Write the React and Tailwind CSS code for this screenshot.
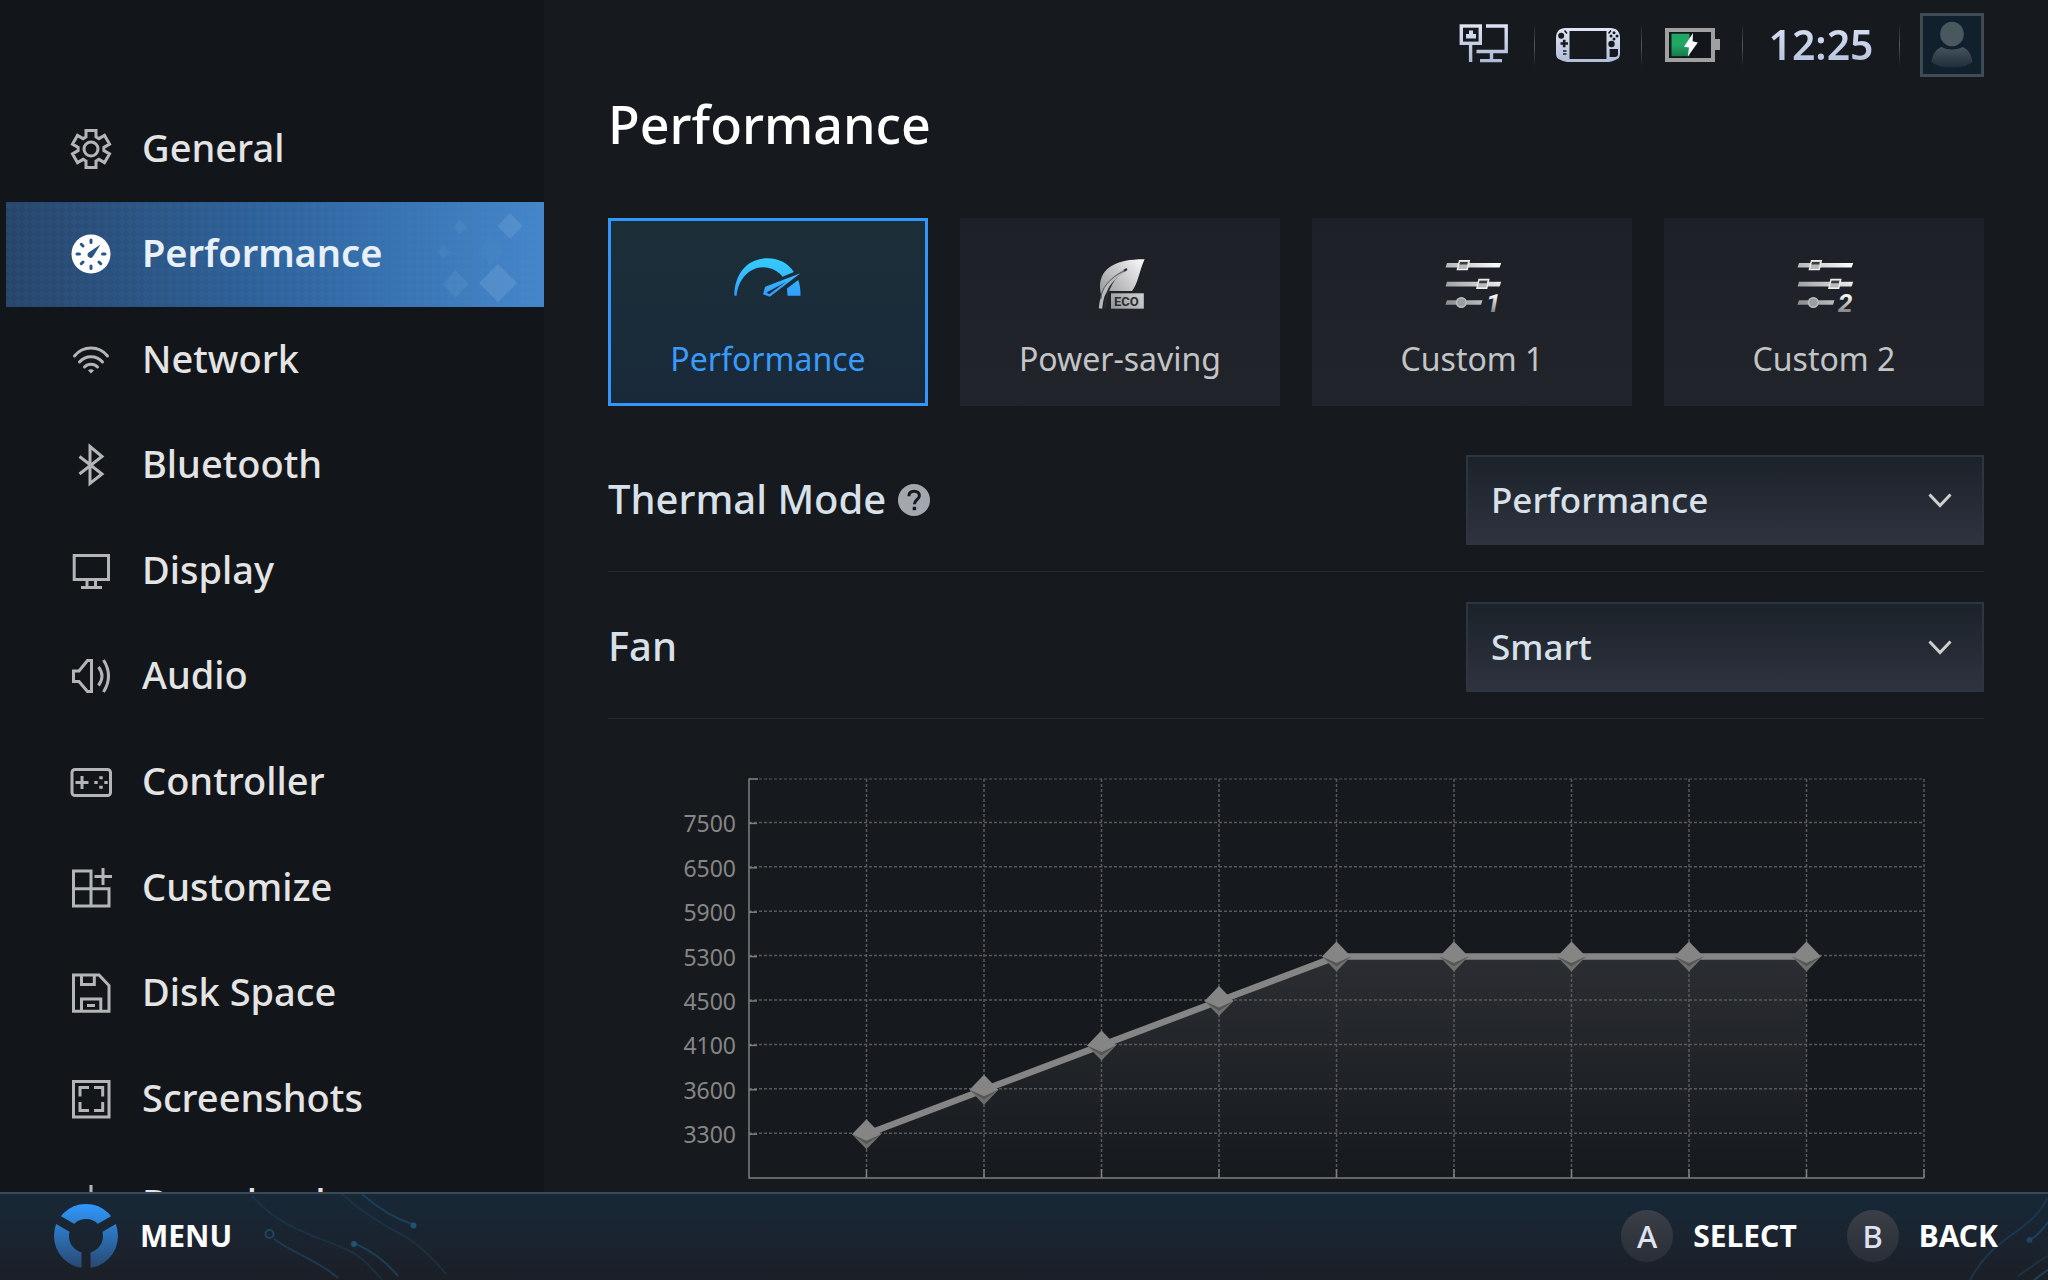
import { useState } from "react";

/* ---------- SIDEBAR ICONS (44 x 44) ---------- */

// six-tooth gear outline around the centre of the 44px box
const gearPoints = Array.from({ length: 6 }, (_, i) => {
  const a = (i * Math.PI) / 3;
  return [[-5, -12], [-5, -18.5], [5, -18.5], [5, -12]]
    .map(([x, y]) => {
      const px = 22 + x * Math.cos(a) - y * Math.sin(a);
      const py = 22 + x * Math.sin(a) + y * Math.cos(a);
      return `${px.toFixed(2)},${py.toFixed(2)}`;
    })
    .join(" ");
}).join(" ");

const icons = {
  general: (
    <>
      <polygon points={gearPoints} />
      <circle cx="22" cy="22" r="7" />
    </>
  ),
  performance: (
    <g stroke="none">
      <circle cx="22" cy="22" r="19.5" fill="#fff" />
      <g stroke="#2a5686" strokeWidth="3" strokeLinecap="round">
        <path d="M22 8 V10.5 M22 34 V36.5 M8 22 H10.5 M33.5 22 H36 M12.3 12.3 L14 14 M12.3 31.7 L14 30 M31.7 31.7 L30 30" />
      </g>
      <path d="M31.5 12.5 L19.6 20.6 A3 3 0 1 0 24 24.6 Z" fill="#2a5686" />
    </g>
  ),
  network: (
    <g strokeLinecap="round">
      <path d="M5.5 18 A21 21 0 0 1 38.5 18 M10.5 24 A15 15 0 0 1 33.5 24 M15.5 29 A9 9 0 0 1 28.5 29" />
      <path d="M19 32.5 Q22 30 25 32.5 L22 35.5 Z" fill="currentColor" stroke="none" />
    </g>
  ),
  bluetooth: <path d="M10.5 13.5 L33 31 L21 40.5 V3.5 L33 13.5 L10.5 31" />,
  display: <path d="M5.2 6.5 H39.5 V30.5 H5.2 Z M18 31 V38 M26.5 31 V38 M12 38.5 H33" />,
  audio: (
    <path d="M4.5 17 H10 L18.5 6.5 H22.5 V37.5 H18.5 L10 27.5 H4.5 Z M29.5 13 Q36.5 22 29.5 31.5 M34.5 6 Q44.5 22 34.5 38" />
  ),
  controller: (
    <>
      <rect x="3" y="9.5" width="38.5" height="26" rx="3" />
      <path d="M6.5 22.5 H19.5 M13 16 V29" />
      <path d="M30.3 17.7 H33.7 M30.3 27.2 H33.7 M25.3 22.5 H28.7 M35.3 22.5 H38.7" />
    </>
  ),
  customize: <path d="M22 22.8 V5 H4.5 V40 H40 V22.8 H4.5 M22 22.8 V40 M25.5 10.5 H43 M34 2 V19" />,
  disk: (
    <path d="M4.5 4 H30 L40 14.5 V40.3 H4.5 Z M12.5 4 V13.5 H25.3 V4 M12.5 40 V28 H31.8 V40 M18 34.5 H26" />
  ),
  screenshots: (
    <>
      <rect x="4.5" y="4.5" width="35.5" height="35.5" />
      <path d="M11 19.5 V10.5 H20 M25 10.5 H33.7 V19.5 M33.7 25 V33.5 H25 M20 33.5 H11 V25" />
    </>
  ),
  downloads: <path d="M22 3 V28 M12 19 L22 29 L32 19 M4.5 30 V40 H39.5 V30" />,
};

const navItems = [
  { id: "general", label: "General" },
  { id: "performance", label: "Performance" },
  { id: "network", label: "Network" },
  { id: "bluetooth", label: "Bluetooth" },
  { id: "display", label: "Display" },
  { id: "audio", label: "Audio" },
  { id: "controller", label: "Controller" },
  { id: "customize", label: "Customize" },
  { id: "disk", label: "Disk Space" },
  { id: "screenshots", label: "Screenshots" },
  { id: "downloads", label: "Downloads" },
];

function ActiveBackdrop() {
  return (
    <>
      <svg className="absolute inset-0 w-full h-full" aria-hidden="true">
        <defs>
          <pattern id="weave" width="8" height="8" patternUnits="userSpaceOnUse">
            <path d="M4 0 L8 4 L4 8 L0 4 Z" fill="#5aa0d0" fillOpacity="0.05" />
          </pattern>
        </defs>
        <rect width="100%" height="100%" fill="url(#weave)" />
      </svg>
      <svg className="absolute right-0 top-0" width="160" height="106" viewBox="0 0 160 106" fill="#a5cbee" aria-hidden="true">
        <path d="M126 11 L138.5 24 L126 37 L113.5 24 Z" fillOpacity="0.16" />
        <path d="M76 18 L82.5 25 L76 32 L69.5 25 Z" fillOpacity="0.1" />
        <path d="M59.5 43 L66 50 L59.5 57 L53 50 Z" fillOpacity="0.08" />
        <path d="M107 34 L120 49 L107 64 L94 49 Z" fillOpacity="0.04" />
        <path d="M71.5 68 L84.5 82 L71.5 96 L58.5 82 Z" fillOpacity="0.1" />
        <path d="M114 62 L133 81 L114 100 L95 81 Z" fillOpacity="0.18" />
      </svg>
    </>
  );
}

function Sidebar() {
  return (
    <aside className="w-[544px] shrink-0 overflow-hidden bg-[#12151a] pt-24 pl-[6px]">
      <nav className="grid auto-rows-fr h-[1161px]">
        {navItems.map((item) => {
          const active = item.id === "performance";
          return (
            <a
              key={item.id}
              href={`#${item.id}`}
              aria-current={active ? "page" : undefined}
              className={
                active
                  ? "relative flex items-center gap-[29px] pl-[63px] text-[38px] leading-[48px] font-semibold text-[#eaf0f7] bg-gradient-to-r from-[#27456a] via-[#2e649e] to-[#4486cb]"
                  : "relative flex items-center gap-[29px] pl-[63px] text-[38px] leading-[48px] font-medium text-[#e4e4e4]"
              }
            >
              {active && <ActiveBackdrop />}
              <svg
                className="relative w-11 h-11 shrink-0 text-[#b4b5b7]"
                viewBox="0 0 44 44"
                fill="none"
                stroke="currentColor"
                strokeWidth="3"
                aria-hidden="true"
              >
                {icons[item.id]}
              </svg>
              <span className="relative pb-1">{item.label}</span>
            </a>
          );
        })}
      </nav>
    </aside>
  );
}

/* ---------- STATUS BAR ---------- */

function Divider() {
  return <span className="w-px h-11 bg-gradient-to-b from-transparent via-[#55585d] to-transparent" />;
}

function StatusBar() {
  return (
    <header className="flex items-center justify-end gap-5 h-[88px] pt-[2px]">
      <svg width="0" height="0" className="absolute" aria-hidden="true">
        <defs>
          <linearGradient id="silver" x1="0" y1="0" x2="0" y2="44" gradientUnits="userSpaceOnUse">
            <stop offset="0" stopColor="#e3e8f8" />
            <stop offset="1" stopColor="#a6b4d0" />
          </linearGradient>
        </defs>
      </svg>

      {/* remote display */}
      <svg width="56" height="46" viewBox="0 0 56 46" fill="none" stroke="url(#silver)" strokeWidth="3.4" aria-hidden="true">
        <rect x="3.3" y="4" width="19" height="17.3" />
        <path d="M12.6 22 V40 M28 4 H48.2 V29.5 H18.5 M33.5 30 V38 M22 38.6 H44" />
        <path d="M11 8.5 H15 V12 H18 V16.5 H8 V12 H11 Z" fill="url(#silver)" stroke="none" />
      </svg>
      <Divider />

      {/* handheld */}
      <svg width="66" height="38" viewBox="0 0 66 38" aria-hidden="true">
        <path d="M14 2 H52 V5 H14 Z M14 33 H52 V36 H14 Z" fill="url(#silver)" />
        <path d="M14.5 2 H11 C4 2 1 6 1 12 V27 C1 32 3 33 8 35 L12 36 H14.5 Z" fill="url(#silver)" />
        <path d="M51.5 2 H55 C62 2 65 6 65 12 V27 C65 32 63 33 58 35 L54 36 H51.5 Z" fill="url(#silver)" />
        <g fill="#16191d">
          <circle cx="6.2" cy="9.8" r="3" />
          <circle cx="56.5" cy="18" r="3.2" />
          <circle cx="59" cy="6.8" r="1.5" />
          <circle cx="59" cy="13" r="1.5" />
          <circle cx="56" cy="9.9" r="1.5" />
          <circle cx="62" cy="9.9" r="1.5" />
          <path d="M54.6 23 H63 V28 Q63 31 60 31 H54.6 Z" />
        </g>
        <g stroke="#16191d" fill="none">
          <path d="M5.5 17.5 H13 M9.2 13.8 V21.2" strokeWidth="2.6" />
          <path d="M8 25 H11.5 M8 28 H11.5" strokeWidth="1.4" />
          <path d="M9.5 4.5 L12 7.5 M56 4.5 L53.5 7.5" strokeWidth="1.6" />
        </g>
      </svg>
      <Divider />

      {/* battery */}
      <svg width="60" height="38" viewBox="0 0 60 38" aria-hidden="true">
        <defs>
          <linearGradient id="charge" x1="0" y1="0" x2="0" y2="1">
            <stop offset="0.5" stopColor="#1fa864" />
            <stop offset="1" stopColor="#167c4a" />
          </linearGradient>
        </defs>
        <rect x="5" y="4" width="46" height="30" fill="#12151a" stroke="#a0a0a0" strokeWidth="4" />
        <rect x="53" y="13" width="5" height="11" fill="#a0a0a0" />
        <rect x="9.5" y="7.7" width="18" height="22.5" fill="url(#charge)" />
        <path d="M31 7 L22 20.8 L27 21.5 L25.8 30.5 L35.8 16.5 L30.6 15.3 Z" fill="#fff" />
      </svg>
      <Divider />

      <time className="w-[116px] pb-[2px] text-center text-[41px] leading-[48px] font-semibold bg-gradient-to-b from-[#dbe2f4] to-[#b3c0da] bg-clip-text text-transparent">
        12:25
      </time>
      <Divider />

      {/* profile */}
      <button aria-label="Profile" className="w-16 h-16 border-[3px] border-[#3f4b55] bg-[#10202d]">
        <svg viewBox="0 0 58 58" aria-hidden="true">
          <defs>
            <linearGradient id="person" x1="0" y1="0" x2="0" y2="58" gradientUnits="userSpaceOnUse">
              <stop offset="0.5" stopColor="#4a575f" />
              <stop offset="0.9" stopColor="#1d2d39" />
            </linearGradient>
          </defs>
          <g fill="url(#person)">
            <ellipse cx="29" cy="18" rx="11.8" ry="12.3" />
            <path d="M18.5 31 Q23 33.5 29 33.5 Q35 33.5 39.5 31 C45 33 49 39 49.3 46 Q44 51.5 29 51.5 Q14 51.5 8.7 46 C9 39 13 33 18.5 31 Z" />
          </g>
        </svg>
      </button>
    </header>
  );
}

/* ---------- PROFILE CARDS ---------- */

function CustomIcon({ digit }) {
  return (
    <g transform="translate(8 3)">
      <g fill="url(#metal)">
        <path d="M3 5 H57.2 L55.6 9.6 H1.5 Z" />
        <path d="M3 23.8 H57.2 L55.6 28.4 H1.5 Z" />
        <path d="M3 42.3 H38.5 L37 46.8 H1.5 Z" />
      </g>
      <g fill="#b9babc" stroke="#eceded" strokeWidth="1.4">
        <path d="M15.5 2.8 H25.3 L23.2 11.6 H13.4 Z" />
        <path d="M35 21.5 H44.8 L42.7 30.3 H32.9 Z" />
        <circle cx="17.3" cy="44.5" r="4.8" fill="#9c9d9f" stroke="#bdbebf" />
      </g>
      <path d="M16 4 H23.8 L23.2 6.5 H15.4 Z M35.5 22.7 H43.3 L42.7 25.2 H34.9 Z" fill="#3a3c40" />
      <text x="42" y="54" fill="url(#digit)" className="font-['Roboto',sans-serif] text-[26px] font-bold italic">
        {digit}
      </text>
    </g>
  );
}

const profiles = [
  {
    id: "performance",
    label: "Performance",
    icon: (
      <g transform="translate(0 1)" fill="url(#boost)">
        <path d="M2.4 39.7 C2.4 17 16 2.3 35.4 2.3 C47 2.3 57 8 61.8 16 L50.6 20.7 C46 15 39 11.3 31 11.3 C17 11.3 6 24 4.6 39.7 Z" />
        <path d="M68.4 17.3 L33.2 30.8 L31 38.3 L37.8 40.8 Z" />
        <path d="M66.3 24 C68 29 68.5 34 68.5 39.7 H55.5 L55 32.5 Z" />
        <path d="M34.5 36.5 L54 26 L37 38.2 Z" fill="#1a2c39" />
      </g>
    ),
  },
  {
    id: "power",
    label: "Power-saving",
    icon: (
      <g transform="translate(12 2)">
        <path d="M48.6 2.3 C22 2 4 10 4 30 C4 34 5 38 6.5 41 L12 34 H36 C42 27 43.5 13 48.6 2.3 Z" fill="url(#metal)" />
        <path d="M31 12 C18 19 10.5 30 9 51" fill="none" stroke="#2a2c32" strokeWidth="2" />
        <path d="M28 14 C15 22 6 32 4.5 51.5" fill="none" stroke="#b9babb" strokeWidth="3.4" />
        <path d="M28 14 C13 21 5 32 5 42" fill="none" stroke="#55575b" strokeWidth="1" />
        <rect x="14" y="35" width="35" height="18" fill="#1f2228" />
        <rect x="15" y="36.3" width="32.8" height="15.4" fill="url(#metal)" />
        <text x="18" y="48.8" fill="#2b2d32" className="font-['Roboto',sans-serif] text-[13px] font-bold">
          ECO
        </text>
      </g>
    ),
  },
  { id: "custom1", label: "Custom 1", icon: <CustomIcon digit="1" /> },
  { id: "custom2", label: "Custom 2", icon: <CustomIcon digit="2" /> },
];

function ProfileCards() {
  const [selected, setSelected] = useState("performance");
  return (
    <div className="grid grid-cols-4 gap-8 mt-[58px]">
      {profiles.map((p) => (
        <button
          key={p.id}
          aria-pressed={selected === p.id}
          onClick={() => setSelected(p.id)}
          className={
            selected === p.id
              ? "flex flex-col items-center gap-[22px] h-[188px] pt-[34px] border-[3px] border-[#3296fb] bg-gradient-to-b from-[#1b2f38] to-[#19293a] text-[#3a9bfb]"
              : "flex flex-col items-center gap-[22px] h-[188px] pt-[34px] border-[3px] border-transparent bg-origin-border bg-gradient-to-b from-[#1d2027] to-[#21242b] text-[#c3c4c5]"
          }
        >
          <svg width="72" height="60" viewBox="0 0 72 60" className="shrink-0 overflow-visible" aria-hidden="true">
            <defs>
              <linearGradient id="boost" x1="0" y1="0" x2="0" y2="42" gradientUnits="userSpaceOnUse">
                <stop offset="0" stopColor="#34ccff" />
                <stop offset="0.4" stopColor="#35bfff" />
                <stop offset="1" stopColor="#3399ff" />
              </linearGradient>
              <linearGradient id="metal" x1="0" y1="50" x2="56" y2="0" gradientUnits="userSpaceOnUse">
                <stop offset="0.1" stopColor="#8f9092" />
                <stop offset="0.9" stopColor="#fafafa" />
              </linearGradient>
              <linearGradient id="digit" x1="0" y1="34" x2="0" y2="56" gradientUnits="userSpaceOnUse">
                <stop offset="0.2" stopColor="#f4f4f4" />
                <stop offset="1" stopColor="#77787a" />
              </linearGradient>
            </defs>
            {p.icon}
          </svg>
          <span className="text-[32px] leading-[44px]">{p.label}</span>
        </button>
      ))}
    </div>
  );
}

/* ---------- SETTINGS ---------- */

function SettingRow({ id, label, options, help }) {
  return (
    <div className="flex items-center justify-between h-[147px] pt-[30px] pb-[26px] border-b border-[#24272c]">
      <div className="flex items-center gap-3">
        <label htmlFor={id} className="text-[40px] leading-[48px] pb-[2px] font-medium text-[#d8e0e9]">
          {label}
        </label>
        {help && (
          <button aria-label={`About ${label}`} className="w-8 h-8">
            <svg viewBox="0 0 32 32" fill="none" aria-hidden="true">
              <circle cx="16" cy="16" r="16" fill="#a3a7ae" />
              <path d="M10.8 12.2 C10.8 9 13 7.2 16.2 7.2 C19.4 7.2 21.4 9.1 21.4 11.7 C21.4 15.5 16.4 16 16.4 20.3" stroke="#16191d" strokeWidth="3" />
              <rect x="14.7" y="22.8" width="3.4" height="3.4" fill="#16191d" />
            </svg>
          </button>
        )}
      </div>
      <div className="relative w-[518px]">
        <select
          id={id}
          className="appearance-none w-full h-[90px] pl-[23px] pr-20 border-2 border-[#2d3541] bg-gradient-to-b from-[#1c2229] to-[#2e3340] text-[35px] font-medium text-[#d8e0e9]"
        >
          {options.map((o) => (
            <option key={o}>{o}</option>
          ))}
        </select>
        <svg
          className="absolute right-8 top-[38px] pointer-events-none"
          width="24"
          height="16"
          viewBox="0 0 24 16"
          fill="none"
          stroke="#cfcfcf"
          strokeWidth="3"
          aria-hidden="true"
        >
          <path d="M1.5 1.5 L12 12.5 L22.5 1.5" />
        </svg>
      </div>
    </div>
  );
}

/* ---------- FAN CURVE ---------- */

const rpmLabels = [7500, 6500, 5900, 5300, 4500, 4100, 3600, 3300];
const fanCurve = [3300, 3600, 4100, 4500, 5300, 5300, 5300, 5300, 5300];

const LEFT = 141;
const RIGHT = 1316;
const TOP = 39;
const BOTTOM = 438;
const colX = (i) => LEFT + 117.5 * (i + 1);
const rowY = (i) => TOP + 44.4 * (i + 1);

function FanChart() {
  const points = fanCurve.map((rpm, i) => [colX(i), rowY(rpmLabels.indexOf(rpm))]);
  const line = points.map((p) => p.join(",")).join(" ");
  const area = `${colX(0)},${BOTTOM} ${line} ${colX(8)},${BOTTOM}`;
  return (
    <svg viewBox="0 0 1376 452" className="w-full h-auto" role="img" aria-label="Fan speed curve">
      <defs>
        <linearGradient id="area" x1="0" y1="0" x2="0" y2="1">
          <stop offset="0" stopColor="#fff" stopOpacity="0.09" />
          <stop offset="1" stopColor="#fff" stopOpacity="0" />
        </linearGradient>
      </defs>

      <polygon points={area} fill="url(#area)" />

      <g stroke="#58595b" strokeWidth="1.5" strokeDasharray="3 2">
        <line x1={LEFT} x2={RIGHT} y1={TOP} y2={TOP} strokeOpacity="0.7" />
        {rpmLabels.map((rpm, i) => (
          <line key={rpm} x1={LEFT} x2={RIGHT} y1={rowY(i) - 1} y2={rowY(i) - 1} />
        ))}
        {Array.from({ length: 10 }, (_, i) => (
          <line key={i} x1={colX(i)} x2={colX(i)} y1={TOP} y2={BOTTOM} />
        ))}
      </g>

      {/* axes and ticks */}
      <g stroke="#7f7f7f" strokeWidth="1.5" fill="none">
        <path d={`M${LEFT + 9} ${TOP} H${LEFT} V${BOTTOM} H${RIGHT}`} />
        {rpmLabels.map((rpm, i) => (
          <path key={rpm} d={`M${LEFT} ${rowY(i)} h8`} />
        ))}
        {Array.from({ length: 10 }, (_, i) => (
          <path key={i} d={`M${colX(i)} ${BOTTOM} v-9`} />
        ))}
      </g>

      {rpmLabels.map((rpm, i) => (
        <text key={rpm} x="128" y={rowY(i) + 9} textAnchor="end" fill="#868686" className="text-[23px]">
          {rpm}
        </text>
      ))}

      <polyline points={line} fill="none" stroke="#858585" strokeWidth="6.5" />
      {points.map(([x, y]) => (
        <g key={x} transform={`translate(${x} ${y})`}>
          <path d="M-14.5 0 L0 15 L14.5 0 Z" fill="#6f6f6f" />
          <path d="M-14.5 0 L0 10 L14.5 0 Z" fill="#565656" />
          <path d="M0 -15 L14.5 0 L0 6.5 L-14.5 0 Z" fill="#858585" />
        </g>
      ))}
    </svg>
  );
}

/* ---------- FOOTER ---------- */

function PadButton({ glyph, label }) {
  return (
    <button className="flex items-center gap-5 text-[30px] leading-10 font-bold text-white">
      <span className="flex items-center justify-center w-[52px] h-[52px] rounded-full bg-gradient-to-b from-[#3a3f48] to-[#2a2e36] text-[31px] font-medium text-[#dfe3f0]">
        {glyph}
      </span>
      {label}
    </button>
  );
}

function Footer() {
  return (
    <footer className="relative shrink-0 flex items-center justify-between h-[88px] pl-[54px] pr-[50px] pb-[2px] border-t-2 border-[#3b4856] bg-gradient-to-b from-[#172837] via-[#1a2430] to-[#1b1f26]">
      {/* circuit traces */}
      <svg className="absolute left-[250px] top-0" width="210" height="86" viewBox="0 0 210 86" fill="none" stroke="#1d4560" strokeWidth="2" aria-hidden="true">
        <path d="M2 2 C30 34 66 42 98 56 C112 63 122 74 132 86" strokeOpacity="0.4" />
        <path d="M92 0 C112 18 138 34 158 44 C172 54 186 68 196 80" strokeOpacity="0.4" />
        <path d="M112 0 C128 14 146 25 162 30" strokeOpacity="0.8" />
        <path d="M24 45 C44 60 68 66 88 84" strokeOpacity="0.7" />
        <path d="M106 50 C124 58 138 70 148 82" strokeOpacity="0.8" />
        <circle cx="19.5" cy="40" r="4" />
        <circle cx="163.5" cy="31.5" r="3" fill="#1e5278" stroke="none" />
        <circle cx="104" cy="50" r="3" fill="#1e5278" stroke="none" />
      </svg>
      <svg className="absolute right-0 top-0" width="90" height="86" viewBox="0 0 90 86" fill="none" stroke="#1d3f5a" strokeWidth="2" aria-hidden="true">
        <path d="M12 86 C24 64 36 54 52 42 C70 30 84 18 89 4" strokeOpacity="0.7" />
        <path d="M72 46 C80 41 86 34 90 28" />
        <path d="M60 82 C72 74 82 66 90 62" strokeOpacity="0.5" />
        <path d="M76 86 C82 82 86 78 90 76" />
        <circle cx="71.5" cy="46" r="3" fill="#1f4468" stroke="none" />
      </svg>

      <button className="relative flex items-center gap-[22px] text-[30px] leading-10 font-bold text-white">
        <svg width="64" height="64" viewBox="0 0 64 64" aria-hidden="true">
          <defs>
            <linearGradient id="ring" x1="0" y1="0" x2="0" y2="64" gradientUnits="userSpaceOnUse">
              <stop offset="0" stopColor="#3098fd" />
              <stop offset="1" stopColor="#28486e" />
            </linearGradient>
            <mask id="gaps" maskUnits="userSpaceOnUse" x="0" y="0" width="64" height="64">
              <rect width="64" height="64" fill="#fff" />
              <path d="M32 32 V66 M32 32 L0 13.5 M32 32 L64 13.5" stroke="#000" strokeWidth="9" />
            </mask>
          </defs>
          <circle cx="32" cy="32" r="24.5" fill="none" stroke="url(#ring)" strokeWidth="15" mask="url(#gaps)" />
        </svg>
        MENU
      </button>
      <div className="relative flex items-center gap-[50px]">
        <PadButton glyph="A" label="SELECT" />
        <PadButton glyph="B" label="BACK" />
      </div>
    </footer>
  );
}

export default function App() {
  return (
    <div className="flex flex-col h-screen overflow-hidden bg-[#16191d] font-['Noto_Sans','Open_Sans',sans-serif]">
      <div className="flex flex-1 min-h-0">
        <Sidebar />
        <main className="flex-1 min-w-0 overflow-hidden px-16">
          <StatusBar />
          <h1 className="text-[52px] leading-[72px] font-medium text-white">Performance</h1>
          <ProfileCards />
          <div className="mt-[19px]">
            <SettingRow id="thermal" label="Thermal Mode" options={["Performance", "Balanced", "Quiet"]} help />
            <SettingRow id="fan" label="Fan" options={["Smart", "Custom"]} />
          </div>
          <div className="mt-[21px]">
            <FanChart />
          </div>
        </main>
      </div>
      <Footer />
    </div>
  );
}
